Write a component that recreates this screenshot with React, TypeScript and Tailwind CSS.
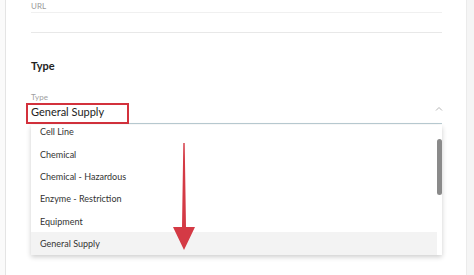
const options = ["Cell Line", "Chemical", "Chemical - Hazardous", "Enzyme - Restriction", "Equipment", "General Supply"];

function DownArrow() {
  return (
    <svg width="24" height="110" viewBox="0 0 24 110" className="absolute left-[172px] top-[141px]">
      <polygon points="11.3,2 12.7,2 14,86 23,86 12,109 1,86 10,86" fill="#d43a45" />
    </svg>
  );
}

export default function App() {
  return (
    <div className="relative flex w-[474px] h-[275px] overflow-hidden bg-white" style={{ fontFamily: "Lato, 'Open Sans', sans-serif" }}>
      <div className="w-[6px] shrink-0 bg-[#fafafa] border-r border-[#e4e4e4]" />
      <div className="flex-1 pl-[25px] pr-[24px]">
        <div className="border-b border-[#f0f0f0] pt-[1px] h-[13px] text-[8px] leading-[10px] text-[#9a9a9a]">URL</div>
        <div className="h-[20px] border-b border-[#e8e8e8]" />
        <div className="mt-[26px] text-[11px] leading-[14px] font-bold text-[#222]">Type</div>
        <div className="mt-[19px] text-[8px] leading-[10px] text-[#a0a0a0]">Type</div>
        <div className="relative">
          <div className="flex items-center justify-between h-[22px] border-b border-[#b9ccd3]">
            <span className="text-[11px] text-[#222]">General Supply</span>
            <svg width="8" height="5" viewBox="0 0 8 5" className="mr-[-1px] mb-[8px]">
              <path d="M1 4.5 L4 1.5 L7 4.5" fill="none" stroke="#b5b5b5" strokeWidth="1" />
            </svg>
          </div>
          <div className="absolute left-[-5px] top-[1px] w-[103px] h-[21px] border-2 border-[#d3313c]" />
          <div className="absolute left-0 right-0 top-[23px] h-[130px] bg-white shadow-[0_2px_5px_rgba(0,0,0,0.2)] overflow-hidden">
            <div className="mt-[-4px] pr-[5px]">
              {options.map((o) => (
                <div key={o} className={`h-[22.3px] flex items-center pl-[9px] text-[9px] text-[#333] ${o === "General Supply" ? "bg-[#f3f3f3]" : ""}`}>{o}</div>
              ))}
            </div>
            <div className="absolute right-[0px] top-[14px] w-[5px] h-[56px] rounded-full bg-[#8a8a8a]" />
          </div>
        </div>
      </div>
      <div className="w-[8px] shrink-0 bg-[#f5f5f5] border-l border-[#ebebeb]" />
      <DownArrow />
    </div>
  );
}
